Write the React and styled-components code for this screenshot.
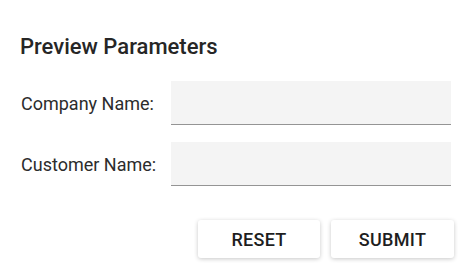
import React from 'react';
import styled, { createGlobalStyle } from 'styled-components';

const GlobalStyle = createGlobalStyle`
  html, body {
    margin: 0;
    padding: 0;
    background: #ffffff;
  }
  body {
    font-family: Roboto, "Liberation Sans", sans-serif;
    color: #222222;
  }
`;

const Dialog = styled.div`
  width: 474px;
  height: 273px;
  box-sizing: border-box;
  padding: 33px 20px 0 20px;
  background: #ffffff;
  display: flex;
  flex-direction: column;
`;

const Title = styled.h2`
  margin: 0;
  font-size: 22px;
  line-height: 28px;
  font-weight: 500;
  color: #262626;
`;

const Form = styled.div`
  margin-top: 20px;
  display: flex;
  flex-direction: column;
  gap: 17px;
`;

const Row = styled.div`
  display: flex;
  align-items: center;
`;

const Label = styled.label`
  width: 150px;
  padding-left: 1px;
  font-size: 18px;
  color: #2c2c2c;
`;

const Input = styled.input`
  width: 280px;
  height: 44px;
  box-sizing: border-box;
  border: none;
  border-bottom: 1px solid #949494;
  background: #f4f4f4;
  padding: 0 12px;
  font-family: inherit;
  font-size: 16px;
  outline: none;
`;

const Actions = styled.div`
  margin-top: 34px;
  display: flex;
  justify-content: flex-end;
  gap: 11px;
`;

const Button = styled.button`
  width: ${p => p.w}px;
  height: 38px;
  border: none;
  border-radius: 3px;
  background: #ffffff;
  box-shadow: 0 1px 4px rgba(0, 0, 0, 0.22);
  font-family: inherit;
  font-size: 18px;
  font-weight: 500;
  letter-spacing: 0.3px;
  text-transform: uppercase;
  color: #1e1e1e;
  cursor: pointer;
`;

const App = () => {
  return (
    <>
      <GlobalStyle />
      <Dialog>
        <Title>Preview Parameters</Title>
        <Form>
          <Row>
            <Label>Company Name:</Label>
            <Input />
          </Row>
          <Row>
            <Label>Customer Name:</Label>
            <Input />
          </Row>
        </Form>
        <Actions>
          <Button w={122}>Reset</Button>
          <Button w={123}>Submit</Button>
        </Actions>
      </Dialog>
    </>
  );
};

export default App;
